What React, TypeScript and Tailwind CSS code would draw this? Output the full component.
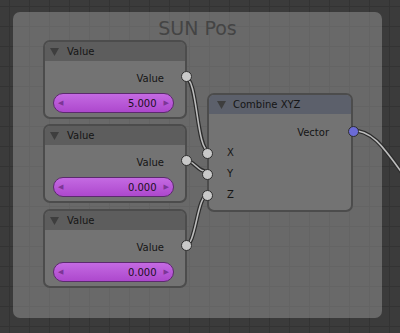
import React from 'react';

const font = { fontFamily: '"DejaVu Sans", Verdana, sans-serif' };

function Socket({ className }: { className: string }) {
  return (
    <span
      className={`absolute w-[11px] h-[11px] rounded-full border border-[#2e2e2e] ${className}`}
    />
  );
}

function Caret() {
  return (
    <svg width="9" height="8" viewBox="0 0 9 8" className="shrink-0">
      <path d="M0,0 H9 L4.5,8 Z" fill="#3e3e3e" />
    </svg>
  );
}

function ValueNode({ top, value }: { top: string; value: string }) {
  return (
    <div
      className={`absolute left-[43px] ${top} w-[144px] h-[79px] rounded-[7px] border-2 border-[#4c4c4c] bg-[#737373] flex flex-col`}
    >
      <div className="h-[19px] rounded-t-[5px] bg-[#5d5d5d] flex items-center pl-[5px] gap-[8px] text-[10px] text-[#151515]">
        <Caret />
        <span>Value</span>
      </div>
      <div className="relative flex justify-end pr-[21px] pt-[12px] text-[10px] leading-[12px] text-[#151515]">
        Value
        <Socket className="right-[-7px] top-[10px] bg-[#c9c9c9]" />
      </div>
      <div className="mt-[8px] ml-[8px] w-[121px] h-[20px] rounded-full border border-[#5c2a6e] bg-[linear-gradient(#c46ae2,#ad48cd)] flex items-center justify-between px-[4px] text-[10px] text-[#1a0f1e]">
        <span className="text-[7px] text-[#7c3596]">◀</span>
        <span className="ml-auto mr-[7px]">{value}</span>
        <span className="text-[7px] text-[#7c3596]">▶</span>
      </div>
    </div>
  );
}

export default function App() {
  return (
    <div
      style={font}
      className="relative w-[400px] h-[333px] overflow-hidden bg-[#3b3b3b] bg-[linear-gradient(to_right,#333_1px,transparent_1px),linear-gradient(to_bottom,#333_1px,transparent_1px)] bg-[size:20px_20px] bg-[position:9px_6px]"
    >
      {/* frame */}
      <div className="absolute left-[13px] top-[12px] w-[369px] h-[306px] rounded-[7px] bg-[#696969] bg-[linear-gradient(to_right,#646464_1px,transparent_1px),linear-gradient(to_bottom,#646464_1px,transparent_1px)] bg-[size:20px_20px] bg-[position:-4px_-6px] flex justify-center">
        <span className="mt-[5px] text-[19px] leading-[22px] text-[#444]">SUN Pos</span>
      </div>

      {/* wires */}
      <svg className="absolute inset-0" width="400" height="333" fill="none">
        {[
          'M185,77 C198,77 196,151 209,151',
          'M183,160 C196,160 196,172 209,172',
          'M184,247 C197,247 196,194 209,194',
          'M350,130 C374,130 384,148 410,184',
        ].map((d) => (
          <g key={d}>
            <path d={d} stroke="#2c2c2c" strokeWidth="4" />
            <path d={d} stroke="#bdbdbd" strokeWidth="1.6" />
          </g>
        ))}
      </svg>

      <ValueNode top="top-[40px]" value="5.000" />
      <ValueNode top="top-[124px]" value="0.000" />
      <ValueNode top="top-[209px]" value="0.000" />

      {/* combine xyz */}
      <div className="absolute left-[207px] top-[93px] w-[146px] h-[119px] rounded-[7px] border-2 border-[#4c4c4c] bg-[#737373] flex flex-col text-[10px] text-[#151515]">
        <div className="h-[19px] rounded-t-[5px] bg-[#5c606b] flex items-center pl-[8px] gap-[7px]">
          <Caret />
          <span>Combine XYZ</span>
        </div>
        <div className="relative flex justify-end pr-[22px] pt-[13px] leading-[12px]">
          Vector
          <Socket className="right-[-8px] top-[12px] bg-[#6b6bd6]" />
        </div>
        <div className="flex flex-col pl-[18px] pt-[8px] gap-[9px] leading-[12px]">
          {['X', 'Y', 'Z'].map((s) => (
            <div key={s} className="relative">
              {s}
              <Socket className="left-[-25px] top-[1px] bg-[#c9c9c9]" />
            </div>
          ))}
        </div>
      </div>
    </div>
  );
}
